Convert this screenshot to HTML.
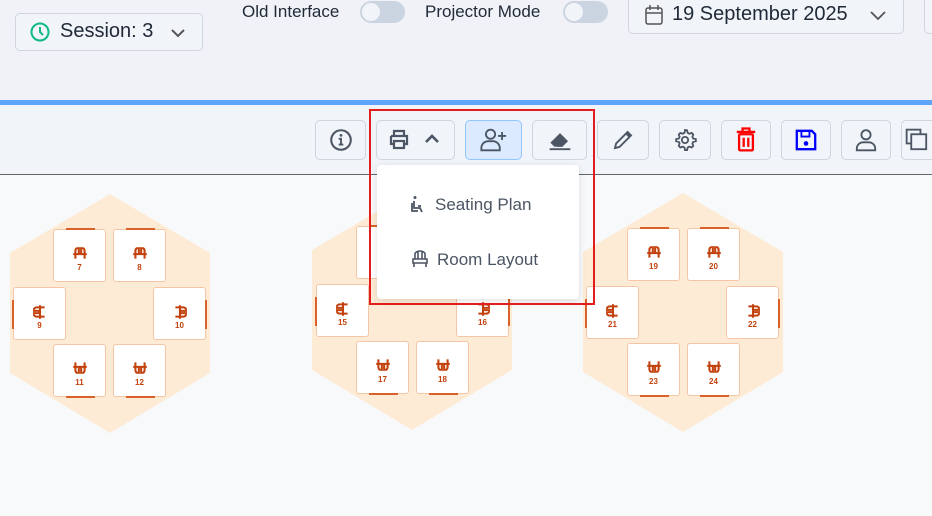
<!DOCTYPE html>
<html><head><meta charset="utf-8"><style>
*{box-sizing:border-box;margin:0;padding:0}
body{width:932px;height:516px;overflow:hidden;background:#f8f9fb;font-family:"Liberation Sans",sans-serif;position:relative}
.a{position:absolute}
.top{left:0;top:0;width:932px;height:100px;background:#f0f2f7}
.blue{left:0;top:100px;width:932px;height:5px;background:#60a5fa}
.tb{left:0;top:105px;width:932px;height:70px;background:#f1f4f9;border-bottom:1px solid #666}
.btn{position:absolute;top:120px;height:40px;border:1px solid #cfd6e0;border-radius:5px;background:#f1f4f9;display:flex;align-items:center;justify-content:center}
.btn svg{transform:scale(1.15)}
.tog{position:absolute;top:1px;width:45px;height:22px;border-radius:11px;background:#cbd5e1}
.tog::after{content:"";position:absolute;left:2px;top:2px;width:18px;height:18px;border-radius:50%;background:#f1f4f9}
.lbl{position:absolute;top:2px;font-size:17px;color:#1f2937}
.seat{position:absolute;width:53px;height:53px;background:#fff;border:1px solid #f4c6a6;border-radius:3px;text-align:center;color:#c2410c;font-size:8px;font-weight:bold}
.seat svg{position:absolute;left:20px;top:18px;transform:scale(1.15)}
.seat span{position:absolute;left:0;right:0;top:33px}
.bt{position:absolute;left:12px;top:-2px;width:29px;height:2px;background:#d9622b}
.bb{position:absolute;left:12px;bottom:-2px;width:29px;height:2px;background:#d9622b}
.bl{position:absolute;top:12px;left:-2px;width:2px;height:29px;background:#d9622b}
.br{position:absolute;top:12px;right:-2px;width:2px;height:29px;background:#d9622b}
</style></head><body>
<div class="a top"></div>
<div class="a" style="left:15px;top:13px;width:188px;height:38px;border:1px solid #cfd6e0;border-radius:5px;background:#f1f4f9"></div>
<svg class="a" style="left:29px;top:21px" width="22" height="22" viewBox="0 0 22 22"><circle cx="11" cy="11" r="8.5" fill="none" stroke="#10b981" stroke-width="2"/><path d="M11 6v5l3 3" fill="none" stroke="#10b981" stroke-width="2"/></svg>
<div class="a" style="left:60px;top:20px;font-size:20px;color:#1f2937">Session: 3</div>
<svg class="a" style="left:170px;top:28px" width="16" height="10"><path d="M2 2l6 6 6-6" fill="none" stroke="#555" stroke-width="2"/></svg>
<div class="lbl" style="left:242px">Old Interface</div><div class="tog" style="left:360px"></div>
<div class="lbl" style="left:425px">Projector Mode</div><div class="tog" style="left:563px"></div>
<div class="a" style="left:628px;top:-5px;width:276px;height:39px;border:1px solid #cfd6e0;border-radius:5px;background:#f1f4f9"></div>
<svg class="a" style="left:644px;top:4px" width="20" height="22"><rect x="2" y="4" width="16" height="16" rx="2" fill="none" stroke="#555" stroke-width="1.5"/><path d="M2 9h16M6 1v5M14 1v5" stroke="#555" stroke-width="1.5"/></svg>
<div class="a" style="left:672px;top:3px;font-size:20px;color:#1f2937">19 September 2025</div>
<svg class="a" style="left:869px;top:10px" width="18" height="10"><path d="M2 2l7 7 7-7" fill="none" stroke="#555" stroke-width="1.8"/></svg>
<div class="a" style="left:924px;top:-5px;width:20px;height:39px;border:1px solid #cfd6e0;border-radius:5px;background:#f1f4f9"></div>
<div class="a blue"></div>
<div class="a tb"></div>
<div class="btn" style="left:315px;width:51px"><svg width="22" height="22"><circle cx="11" cy="11" r="8.5" fill="none" stroke="#4b5563" stroke-width="1.8"/><circle cx="11" cy="7" r="1.2" fill="#4b5563"/><path d="M9 10h2v5M9 15h4" stroke="#4b5563" stroke-width="1.6" fill="none"/></svg></div>
<div class="btn" style="left:376px;width:79px"><svg width="60" height="24" style="transform:none"><path d="M8 8V3h10v5M5 8h16v8h-3M8 16H5V8" fill="none" stroke="#4b5563" stroke-width="2.2"/><rect x="8" y="13" width="10" height="7" fill="none" stroke="#4b5563" stroke-width="2.2"/><path d="M40 14l6-6 6 6" fill="none" stroke="#4b5563" stroke-width="2.6"/></svg></div>
<div class="btn" style="left:465px;width:57px;background:#dbeafe;border-color:#93c5fd"><svg width="28" height="24"><circle cx="11" cy="7" r="4" fill="none" stroke="#4b5563" stroke-width="1.6"/><path d="M3 21v-2a6 6 0 0 1 6-6h4a6 6 0 0 1 6 6v2z" fill="none" stroke="#4b5563" stroke-width="1.6"/><path d="M21 5v7M17.5 8.5h7" stroke="#4b5563" stroke-width="1.6"/></svg></div>
<div class="btn" style="left:532px;width:55px"><svg width="24" height="22"><path d="M4 13l8-8 7 7-5 5H9z" fill="#4b5563"/><path d="M4 13l4 4" stroke="#4b5563"/><path d="M3 19h18" stroke="#4b5563" stroke-width="1.6"/></svg></div>
<div class="btn" style="left:597px;width:52px"><svg width="22" height="22"><path d="M4 18l1-4L15 4l3 3L8 17z" fill="none" stroke="#4b5563" stroke-width="1.6"/><path d="M14 5l3 3" stroke="#4b5563" stroke-width="2.5"/></svg></div>
<div class="btn" style="left:659px;width:52px"><svg width="22" height="22" viewBox="0 0 24 24"><path d="M12 2.5l2 .3.5 2.4 1.6.9 2.3-.8 1.4 1.5-.8 2.3.9 1.6 2.4.5v2l-2.4.5-.9 1.6.8 2.3-1.4 1.5-2.3-.8-1.6.9-.5 2.4h-2l-.5-2.4-1.6-.9-2.3.8-1.5-1.5.8-2.3-.9-1.6-2.4-.5v-2l2.4-.5.9-1.6-.8-2.3 1.5-1.5 2.3.8 1.6-.9.5-2.4z" fill="none" stroke="#4b5563" stroke-width="1.7"/><circle cx="12" cy="12" r="3" fill="none" stroke="#4b5563" stroke-width="1.7"/></svg></div>
<div class="btn" style="left:721px;width:50px"><svg width="22" height="24"><path d="M3 5h16M8 5V2h6v3" fill="none" stroke="red" stroke-width="2"/><rect x="5" y="7" width="12" height="14" rx="1" fill="none" stroke="red" stroke-width="2"/><path d="M9 10v8M13 10v8" stroke="red" stroke-width="2"/></svg></div>
<div class="btn" style="left:781px;width:50px"><svg width="22" height="22"><path d="M3 3h13l3 3v13H3z" fill="none" stroke="#0000ff" stroke-width="2"/><path d="M7 3v5h7V3" fill="none" stroke="#0000ff" stroke-width="1.6"/><circle cx="11" cy="14" r="2" fill="#0000ff"/></svg></div>
<div class="btn" style="left:841px;width:50px"><svg width="22" height="22"><circle cx="11" cy="6.5" r="4" fill="none" stroke="#4b5563" stroke-width="1.6"/><path d="M3 20v-1.5a5.5 5.5 0 0 1 5.5-5.5h5a5.5 5.5 0 0 1 5.5 5.5V20z" fill="none" stroke="#4b5563" stroke-width="1.6"/></svg></div>
<div class="btn" style="left:901px;width:50px;justify-content:flex-start;padding-left:4px"><svg width="22" height="22"><rect x="2" y="2" width="12" height="12" fill="none" stroke="#4b5563" stroke-width="1.6"/><rect x="6" y="6" width="13" height="13" fill="#f1f4f9" stroke="#4b5563" stroke-width="1.6"/></svg></div>

<svg class="a" style="left:0;top:0" width="932" height="516">
<polygon points="110,194 210,253 210,373 110,433 10,373 10,253" fill="#feebd5"/>
<polygon points="412,191 512,250 512,370 412,430 312,370 312,250" fill="#feebd5"/>
<polygon points="683,193 783,252 783,372 683,432 583,372 583,252" fill="#feebd5"/>
</svg>
<div class="seat" style="left:53px;top:229px"><div class="bt"></div><svg width="12" height="10"><path d="M2 6V3a4 3 0 0 1 8 0v3M0 6h12M2 6v4M10 6v4M5 1v5M7 1v5" fill="none" stroke="#c2410c" stroke-width="1.8"/></svg><span>7</span></div>
<div class="seat" style="left:113px;top:229px"><div class="bt"></div><svg width="12" height="10"><path d="M2 6V3a4 3 0 0 1 8 0v3M0 6h12M2 6v4M10 6v4M5 1v5M7 1v5" fill="none" stroke="#c2410c" stroke-width="1.8"/></svg><span>8</span></div>
<div class="seat" style="left:13px;top:287px"><div class="bl"></div><svg width="12" height="12" style="transform:rotate(-90deg) scale(1.15)"><path d="M2 6V3a4 3 0 0 1 8 0v3M0 6h12M2 6v4M10 6v4M5 1v5M7 1v5" fill="none" stroke="#c2410c" stroke-width="1.8"/></svg><span>9</span></div>
<div class="seat" style="left:153px;top:287px"><div class="br"></div><svg width="12" height="12" style="transform:rotate(90deg) scale(1.15)"><path d="M2 6V3a4 3 0 0 1 8 0v3M0 6h12M2 6v4M10 6v4M5 1v5M7 1v5" fill="none" stroke="#c2410c" stroke-width="1.8"/></svg><span>10</span></div>
<div class="seat" style="left:53px;top:344px"><div class="bb"></div><svg width="12" height="10" style="transform:rotate(180deg) scale(1.15)"><path d="M2 6V3a4 3 0 0 1 8 0v3M0 6h12M2 6v4M10 6v4M5 1v5M7 1v5" fill="none" stroke="#c2410c" stroke-width="1.8"/></svg><span>11</span></div>
<div class="seat" style="left:113px;top:344px"><div class="bb"></div><svg width="12" height="10" style="transform:rotate(180deg) scale(1.15)"><path d="M2 6V3a4 3 0 0 1 8 0v3M0 6h12M2 6v4M10 6v4M5 1v5M7 1v5" fill="none" stroke="#c2410c" stroke-width="1.8"/></svg><span>12</span></div>

<div class="seat" style="left:356px;top:226px"><div class="bt"></div><span>13</span></div>
<div class="seat" style="left:416px;top:226px"><div class="bt"></div><span>14</span></div>
<div class="seat" style="left:316px;top:284px"><div class="bl"></div><svg width="12" height="12" style="transform:rotate(-90deg) scale(1.15)"><path d="M2 6V3a4 3 0 0 1 8 0v3M0 6h12M2 6v4M10 6v4M5 1v5M7 1v5" fill="none" stroke="#c2410c" stroke-width="1.8"/></svg><span>15</span></div>
<div class="seat" style="left:456px;top:284px"><div class="br"></div><svg width="12" height="12" style="transform:rotate(90deg) scale(1.15)"><path d="M2 6V3a4 3 0 0 1 8 0v3M0 6h12M2 6v4M10 6v4M5 1v5M7 1v5" fill="none" stroke="#c2410c" stroke-width="1.8"/></svg><span>16</span></div>
<div class="seat" style="left:356px;top:341px"><div class="bb"></div><svg width="12" height="10" style="transform:rotate(180deg) scale(1.15)"><path d="M2 6V3a4 3 0 0 1 8 0v3M0 6h12M2 6v4M10 6v4M5 1v5M7 1v5" fill="none" stroke="#c2410c" stroke-width="1.8"/></svg><span>17</span></div>
<div class="seat" style="left:416px;top:341px"><div class="bb"></div><svg width="12" height="10" style="transform:rotate(180deg) scale(1.15)"><path d="M2 6V3a4 3 0 0 1 8 0v3M0 6h12M2 6v4M10 6v4M5 1v5M7 1v5" fill="none" stroke="#c2410c" stroke-width="1.8"/></svg><span>18</span></div>

<div class="seat" style="left:627px;top:228px"><div class="bt"></div><svg width="12" height="10"><path d="M2 6V3a4 3 0 0 1 8 0v3M0 6h12M2 6v4M10 6v4M5 1v5M7 1v5" fill="none" stroke="#c2410c" stroke-width="1.8"/></svg><span>19</span></div>
<div class="seat" style="left:687px;top:228px"><div class="bt"></div><svg width="12" height="10"><path d="M2 6V3a4 3 0 0 1 8 0v3M0 6h12M2 6v4M10 6v4M5 1v5M7 1v5" fill="none" stroke="#c2410c" stroke-width="1.8"/></svg><span>20</span></div>
<div class="seat" style="left:586px;top:286px"><div class="bl"></div><svg width="12" height="12" style="transform:rotate(-90deg) scale(1.15)"><path d="M2 6V3a4 3 0 0 1 8 0v3M0 6h12M2 6v4M10 6v4M5 1v5M7 1v5" fill="none" stroke="#c2410c" stroke-width="1.8"/></svg><span>21</span></div>
<div class="seat" style="left:726px;top:286px"><div class="br"></div><svg width="12" height="12" style="transform:rotate(90deg) scale(1.15)"><path d="M2 6V3a4 3 0 0 1 8 0v3M0 6h12M2 6v4M10 6v4M5 1v5M7 1v5" fill="none" stroke="#c2410c" stroke-width="1.8"/></svg><span>22</span></div>
<div class="seat" style="left:627px;top:343px"><div class="bb"></div><svg width="12" height="10" style="transform:rotate(180deg) scale(1.15)"><path d="M2 6V3a4 3 0 0 1 8 0v3M0 6h12M2 6v4M10 6v4M5 1v5M7 1v5" fill="none" stroke="#c2410c" stroke-width="1.8"/></svg><span>23</span></div>
<div class="seat" style="left:687px;top:343px"><div class="bb"></div><svg width="12" height="10" style="transform:rotate(180deg) scale(1.15)"><path d="M2 6V3a4 3 0 0 1 8 0v3M0 6h12M2 6v4M10 6v4M5 1v5M7 1v5" fill="none" stroke="#c2410c" stroke-width="1.8"/></svg><span>24</span></div>

<div class="a" style="left:377px;top:165px;width:202px;height:134px;background:#fff;border-radius:4px;box-shadow:0 2px 8px rgba(0,0,0,.12)"></div>
<svg class="a" style="left:410px;top:195px" width="18" height="18"><circle cx="5" cy="2.5" r="1.5" fill="#4b5563"/><path d="M4 6v7h6l2 4M2 8v8h6M8 11h3" fill="none" stroke="#4b5563" stroke-width="1.8"/></svg>
<div class="a" style="left:435px;top:195px;font-size:17px;color:#4b5563">Seating Plan</div>
<svg class="a" style="left:411px;top:250px" width="18" height="18"><path d="M4 9V4a5 3 0 0 1 10 0v5M7 2v7M11 2v7M2 9h14v4H2zM3 13v4M15 13v4" fill="none" stroke="#4b5563" stroke-width="1.6"/></svg>
<div class="a" style="left:437px;top:250px;font-size:17px;color:#4b5563">Room Layout</div>
<div class="a" style="left:369px;top:109px;width:226px;height:196px;border:2px solid #e11d1d"></div>
</body></html>
